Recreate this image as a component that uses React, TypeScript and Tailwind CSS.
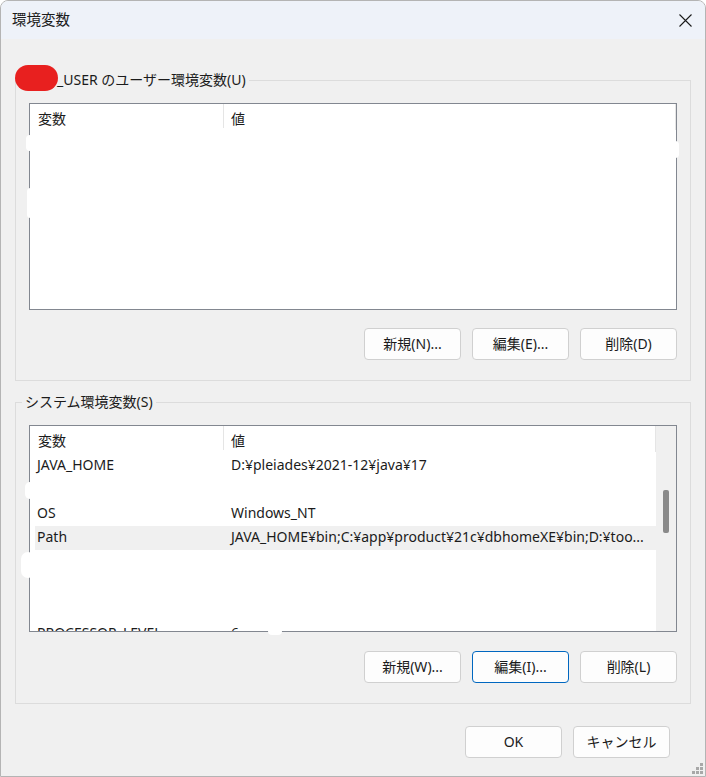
import React from 'react';

type Row = { name: string; value: string; selected?: boolean };

const userRows: Row[] = [];

const systemRows: Row[] = [
  { name: 'JAVA_HOME', value: 'D:¥pleiades¥2021-12¥java¥17' },
  { name: '', value: '' },
  { name: 'OS', value: 'Windows_NT' },
  { name: 'Path', value: 'JAVA_HOME¥bin;C:¥app¥product¥21c¥dbhomeXE¥bin;D:¥too...', selected: true },
  { name: '', value: '' },
  { name: '', value: '' },
  { name: '', value: '' },
  { name: 'PROCESSOR_LEVEL', value: '6' },
];

function DlgButton({ label, focused = false }: { label: string; focused?: boolean }) {
  return (
    <button
      className={`h-[32px] w-[97px] rounded-[4px] border bg-[#fdfdfd] pb-[1px] text-[14px] leading-none text-[#1b1b1b] ${
        focused ? 'border-[#0067c0]' : 'border-[#d0d0d0]'
      }`}
    >
      {label}
    </button>
  );
}

function VarList({ rows, scroll }: { rows: Row[]; scroll?: boolean }) {
  return (
    <div className="flex h-[207px] overflow-hidden border border-[#828790] bg-white">
      <div className="flex min-w-0 flex-1 flex-col">
        {/* header */}
        <div className="flex h-[28px] shrink-0 items-center">
          <div className="w-[193px] pl-[8px]">変数</div>
          <div className="h-[24px] w-px self-start bg-[#e5e5e5]" />
          <div className="flex-1 pl-[7px]">値</div>
          <div className="h-[26px] w-px self-start bg-[#e5e5e5]" />
        </div>
        {rows.map((r, i) => (
          <div
            key={i}
            className={`ml-[5px] grid h-[24px] shrink-0 grid-cols-[194px_1fr] items-center pb-[3px] ${
              r.selected ? 'bg-[#f0f0f0]' : ''
            }`}
          >
            <div className="whitespace-nowrap pl-[2px]">{r.name}</div>
            <div className="overflow-hidden whitespace-nowrap pl-[2px]">{r.value}</div>
          </div>
        ))}
      </div>
      {scroll && (
        <div className="flex w-[20px] shrink-0 justify-center bg-[#f0f0f0]">
          <div className="mt-[64px] h-[43px] w-[6px] rounded-[2px] bg-[#8a8a8a]" />
        </div>
      )}
    </div>
  );
}

export default function App() {
  return (
    <div className="relative h-[777px] w-[706px] overflow-hidden bg-white font-['Noto_Sans','Noto_Sans_CJK_JP',sans-serif] text-[14px] text-[#1b1b1b]">
      <div className="flex h-[777px] w-[706px] flex-col overflow-hidden rounded-t-[8px] border border-[#b4b4b4] bg-[#f0f0f0]">
        {/* title bar */}
        <div className="flex h-[38px] shrink-0 items-center justify-between bg-[#eef2f9] pl-[11px] pr-[13px]">
          <span className="text-[14.5px]">環境変数</span>
          <svg width="13" height="13" viewBox="0 0 13 13" fill="none" stroke="#1b1b1b" strokeWidth="1.1">
            <path d="M0.5 0.5 L12.5 12.5 M12.5 0.5 L0.5 12.5" />
          </svg>
        </div>

        <div className="flex flex-1 flex-col px-[14px]">
          {/* user variables */}
          <fieldset className="mt-[31px] border border-[#dcdcdc] p-0">
            <legend className="ml-[6px] px-[3px] leading-[20px]">
              <span className="inline-block w-[32px]" />_USER のユーザー環境変数(U)
            </legend>
            <div className="px-[13px] pb-[20px] pt-[13px]">
              <VarList rows={userRows} />
              <div className="mt-[18px] flex justify-end gap-[11px]">
                <DlgButton label="新規(N)..." />
                <DlgButton label="編集(E)..." />
                <DlgButton label="削除(D)" />
              </div>
            </div>
          </fieldset>

          {/* system variables */}
          <fieldset className="mt-[11px] border border-[#dcdcdc] p-0">
            <legend className="ml-[6px] px-[3px] leading-[20px]">システム環境変数(S)</legend>
            <div className="px-[13px] pb-[20px] pt-[13px]">
              <VarList rows={systemRows} scroll />
              <div className="mt-[19px] flex justify-end gap-[11px]">
                <DlgButton label="新規(W)..." />
                <DlgButton label="編集(I)..." focused />
                <DlgButton label="削除(L)" />
              </div>
            </div>
          </fieldset>

          <div className="mt-[22px] flex justify-end gap-[11px] pr-[21px]">
            <DlgButton label="OK" />
            <DlgButton label="キャンセル" />
          </div>
        </div>
      </div>

      {/* redaction marks */}
      <div className="absolute left-[15px] top-[65px] h-[26px] w-[43px] rounded-full bg-[#e8201f]" />
      <div className="absolute left-[26px] top-[135px] h-[16px] w-[8px] rounded-full bg-white" />
      <div className="absolute left-[671px] top-[141px] h-[17px] w-[8px] rounded-full bg-white" />
      <div className="absolute left-[27px] top-[188px] h-[30px] w-[7px] rounded-full bg-white" />
      <div className="absolute left-[25px] top-[482px] h-[17px] w-[10px] rounded-full bg-white" />
      <div className="absolute left-[21px] top-[552px] h-[26px] w-[14px] rounded-full bg-white" />
      <div className="absolute left-[268px] top-[627px] h-[8px] w-[14px] rounded-full bg-white" />

      {/* resize grip */}
      <svg className="absolute left-[692px] top-[763px]" width="11" height="11" viewBox="0 0 11 11" fill="#a8a8a8">
        <rect x="8" y="0" width="3" height="3" />
        <rect x="4" y="4" width="3" height="3" />
        <rect x="8" y="4" width="3" height="3" />
        <rect x="0" y="8" width="3" height="3" />
        <rect x="4" y="8" width="3" height="3" />
        <rect x="8" y="8" width="3" height="3" />
      </svg>
    </div>
  );
}
